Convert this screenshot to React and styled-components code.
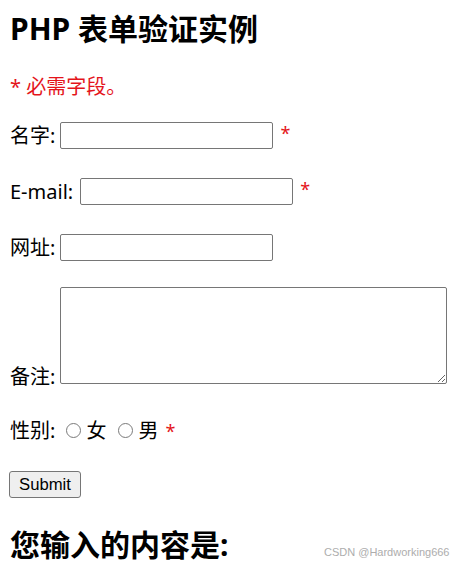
import React from "react";
import styled, { createGlobalStyle } from "styled-components";

const Global = createGlobalStyle`
  html, body { margin: 0; padding: 0; background: #fff; }
  body { font-family: "Noto Sans", "Noto Sans CJK SC", sans-serif; color: #000; }
`;

const Page = styled.div`
  position: relative;
  width: 461px;
  height: 570px;
  overflow: hidden;
  padding-left: 10px;
  box-sizing: border-box;
  background: #fff;
`;

const Title = styled.h2`
  margin: ${(p) => p.$top}px 0 0;
  font-size: 30px;
  line-height: 36px;
  font-weight: 700;
`;

const Note = styled.div`
  margin-top: ${(p) => p.$top}px;
  font-size: 20px;
  line-height: 20px;
  color: #e4141b;
`;

const Form = styled.form`
  display: flex;
  flex-direction: column;
  align-items: flex-start;
`;

const Row = styled.div`
  display: flex;
  align-items: ${(p) => (p.$bottom ? "flex-end" : "center")};
  margin-top: ${(p) => p.$top}px;
  font-size: 20px;
  line-height: 20px;
`;

const Label = styled.span`
  margin-right: ${(p) => p.$gap ?? 5}px;
  margin-bottom: ${(p) => (p.$drop ? "-3px" : "0")};
  white-space: nowrap;
`;

const TextInput = styled.input`
  width: 213px;
  height: 27px;
  box-sizing: border-box;
  border: 1px solid #767676;
  border-radius: 2px;
  padding: 1px 2px;
  margin: 0;
  font-size: 16px;
  background: #fff;
`;

const Area = styled.textarea`
  width: 387px;
  height: 97px;
  box-sizing: border-box;
  border: 1px solid #767676;
  border-radius: 2px;
  margin: 0;
  padding: 2px;
  font-size: 16px;
`;

const Star = styled.span`
  color: #e4141b;
  font-size: 18px;
  margin-left: ${(p) => p.$gap}px;
  align-self: flex-start;
  line-height: 20px;
  margin-top: 1px;
`;

const Radio = styled.input`
  appearance: none;
  -webkit-appearance: none;
  display: block;
  flex: 0 0 15px;
  width: 15px;
  height: 15px;
  min-width: 15px;
  min-height: 15px;
  box-sizing: border-box;
  border: 1.5px solid #7a7a7a;
  border-radius: 50%;
  margin: 0 5px 0 ${(p) => p.$left}px;
  background: #fff;
`;

const Submit = styled.button`
  margin-top: ${(p) => p.$top}px;
  width: 72px;
  height: 27px;
  box-sizing: border-box;
  border: 1px solid #767676;
  border-radius: 3px;
  background: #efefef;
  font-family: "Liberation Sans", Arial, sans-serif;
  font-size: 16.7px;
  color: #000;
  padding: 0;
  margin-left: -1px;
`;

const Watermark = styled.div`
  position: absolute;
  left: 324px;
  top: 546px;
  font-family: "Liberation Sans", Arial, sans-serif;
  font-size: 11px;
  line-height: 13px;
  color: #adadad;
  white-space: nowrap;
`;

export default function App() {
  return (
    <>
      <Global />
      <Page>
        <Title $top={11}>PHP 表单验证实例</Title>
        <Note $top={30}>* 必需字段。</Note>
        <Form onSubmit={(e) => e.preventDefault()}>
          <Row $top={25}>
            <Label>名字:</Label>
            <TextInput type="text" />
            <Star $gap={7}>*</Star>
          </Row>
          <Row $top={29}>
            <Label $gap={7}>E-mail:</Label>
            <TextInput type="text" />
            <Star $gap={7}>*</Star>
          </Row>
          <Row $top={29}>
            <Label>网址:</Label>
            <TextInput type="text" />
          </Row>
          <Row $top={26} $bottom>
            <Label $drop>备注:</Label>
            <Area rows={5} cols={40} />
          </Row>
          <Row $top={36}>
            <Label>性别:</Label>
            <Radio type="radio" name="gender" $left={6} />
            <span>女</span>
            <Radio type="radio" name="gender" $left={12} />
            <span>男</span>
            <Star $gap={7}>*</Star>
          </Row>
          <Submit type="submit" $top={30}>Submit</Submit>
        </Form>
        <Title $top={29}>您输入的内容是:</Title>
        <Watermark>CSDN @Hardworking666</Watermark>
      </Page>
    </>
  );
}
